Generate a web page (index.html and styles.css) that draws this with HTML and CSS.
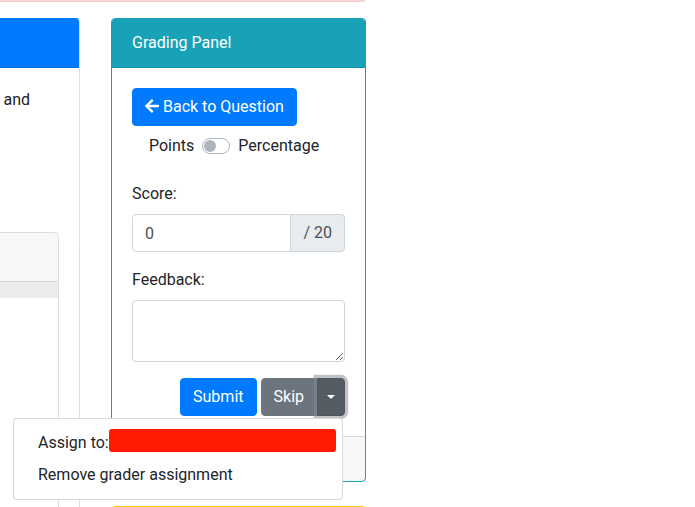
FILE: index.html
```html
<!DOCTYPE html>
<html lang="en">
<head>
<meta charset="utf-8">
<title>Grading Panel</title>
<link rel="stylesheet" href="styles.css">
</head>
<body>
<div class="page">
  <div class="alert"></div>
  <div class="row">
    <div class="col-main">
      <div class="card card-question">
        <div class="card-header header-primary"></div>
        <div class="card-body">
          <p class="question-text">and</p>
          <div class="card card-answer">
            <div class="card-header"></div>
            <div class="answer-band"></div>
            <div class="answer-body"></div>
          </div>
        </div>
      </div>
    </div>
    <div class="col-side">
      <div class="card card-info">
        <div class="card-header header-info">Grading Panel</div>
        <div class="card-body">
          <div>
            <button class="btn btn-primary" type="button"><svg class="icon" viewBox="0 0 448 512" aria-hidden="true"><path fill="currentColor" d="M257.5 445.1l-22.2 22.2c-9.4 9.4-24.6 9.4-33.9 0L7 273c-9.4-9.4-9.4-24.6 0-33.9L201.4 44.7c9.4-9.4 24.6-9.4 33.9 0l22.2 22.2c9.5 9.5 9.3 25-.4 34.3L136.6 216H424c13.3 0 24 10.7 24 24v32c0 13.3-10.7 24-24 24H136.6l120.5 114.8c9.8 9.3 10 24.8.4 34.3z"/></svg> Back to Question</button>
          </div>
          <div class="unit-toggle">
            <span>Points</span>
            <label class="switch"><span class="switch-track"><span class="switch-knob"></span></span>Percentage</label>
          </div>
          <div class="form-group score-group">
            <label class="form-label" for="score">Score:</label>
            <div class="input-group">
              <input class="form-control input-score" id="score" type="text" value="0">
              <span class="input-append">/ 20</span>
            </div>
          </div>
          <div class="form-group">
            <label class="form-label" for="feedback">Feedback:</label>
            <textarea class="form-control textarea" id="feedback" rows="2"></textarea>
          </div>
          <div class="actions">
            <button class="btn btn-primary" type="button">Submit</button>
            <div class="btn-group">
              <button class="btn btn-secondary btn-left" type="button">Skip</button>
              <button class="btn btn-secondary btn-split" type="button"><span class="caret"></span></button>
              <div class="dropdown-menu">
                <div class="dropdown-item">Assign to:<span class="redacted"></span></div>
                <div class="dropdown-item">Remove grader assignment</div>
              </div>
            </div>
          </div>
        </div>
        <div class="card-footer"><span class="footer-text"></span></div>
      </div>
      <div class="card card-warning"></div>
    </div>
  </div>
</div>
</body>
</html>
```
FILE: styles.css
```css
* {
  box-sizing: border-box;
}

body {
  margin: 0;
  height: 507px;
  overflow: hidden;
  background: #fff;
  color: #212529;
  font-family: Roboto, "Noto Sans", "Liberation Sans", sans-serif;
  font-size: 16px;
  line-height: 1.5;
}

.page {
  width: 586px;
  margin-left: -220px;
}

.alert {
  height: 60px;
  margin-top: -58px;
  margin-bottom: 16px;
  background: #f8d7da;
  border: 1px solid #f5c6cb;
  border-radius: 4px;
}

.row {
  display: flex;
  gap: 31px;
  align-items: flex-start;
}

.col-main {
  flex: 0 0 300px;
  min-width: 0;
}

.col-side {
  flex: 0 0 255px;
  min-width: 0;
}

.card {
  background: #fff;
  border: 1px solid rgba(0, 0, 0, 0.125);
  border-radius: 4px;
  overflow: hidden;
}

.card-header {
  min-height: 49px;
  padding: 12px 20px;
  background: rgba(0, 0, 0, 0.03);
  border-bottom: 1px solid rgba(0, 0, 0, 0.125);
  white-space: nowrap;
}

.card-body {
  padding: 20px;
}

.card-footer {
  padding: 12px 20px;
  background: rgba(0, 0, 0, 0.03);
  border-top: 1px solid rgba(0, 0, 0, 0.125);
}

.footer-text {
  display: block;
  height: 20px;
}

.card-question {
  min-height: 700px;
  border-top-color: #007bff;
}

.header-primary {
  background: #007bff;
  color: #fff;
}

.question-text {
  margin: 0 0 16px;
  padding-right: 29px;
  text-align: right;
  white-space: nowrap;
}

.card-answer {
  margin-top: 120px;
  min-height: 500px;
  border-color: #dcdcdc;
}

.answer-band {
  height: 16px;
  background: #ececec;
}

.card-info {
  border-color: #17a2b8;
  overflow: visible;
}

.header-info {
  background: #17a2b8;
  color: #fff;
  border-radius: 3px 3px 0 0;
}

.card-warning {
  margin-top: 24px;
  height: 200px;
  border-color: #ffc107;
}

.btn {
  display: inline-block;
  padding: 6px 12px;
  border: 1px solid transparent;
  border-radius: 4px;
  font-family: inherit;
  font-size: 16px;
  line-height: 24px;
  color: #fff;
  cursor: pointer;
  white-space: nowrap;
}

.btn-primary {
  background: #007bff;
  border-color: #007bff;
}

.btn-secondary {
  background: #6c757d;
  border-color: #6c757d;
}

.icon {
  width: 14px;
  height: 16px;
  vertical-align: -2px;
}

.unit-toggle {
  display: flex;
  align-items: center;
  gap: 8px;
  height: 24px;
  margin-top: 8px;
  margin-left: 17px;
}

.switch {
  display: flex;
  align-items: center;
  gap: 8px;
}

.switch-track {
  display: block;
  width: 28px;
  height: 16px;
  padding: 1px;
  border: 1px solid #adb5bd;
  border-radius: 8px;
  background: #fff;
}

.switch-knob {
  display: block;
  width: 12px;
  height: 12px;
  border-radius: 50%;
  background: #adb5bd;
}

.form-group {
  margin-bottom: 16px;
}

.score-group {
  margin-top: 24px;
}

.form-label {
  display: block;
  margin-bottom: 8px;
}

.input-group {
  display: flex;
}

.form-control {
  display: block;
  padding: 6px 12px;
  border: 1px solid #ced4da;
  border-radius: 4px;
  background: #fff;
  color: #495057;
  font-family: inherit;
  font-size: 16px;
  line-height: 24px;
}

.input-score {
  flex: 1 1 auto;
  min-width: 0;
  height: 38px;
  border-radius: 4px 0 0 4px;
}

.input-append {
  padding: 6px 12px;
  margin-left: -1px;
  border: 1px solid #ced4da;
  border-radius: 0 4px 4px 0;
  background: #e9ecef;
  color: #495057;
  line-height: 24px;
  white-space: nowrap;
}

.textarea {
  width: 100%;
  height: 62px;
  resize: vertical;
}

.actions {
  display: flex;
  justify-content: flex-end;
  gap: 4px;
}

.btn-group {
  position: relative;
  display: flex;
}

.btn-left {
  border-radius: 4px 0 0 4px;
}

.btn-split {
  position: relative;
  z-index: 1;
  padding: 6px 9px;
  border-radius: 0 4px 4px 0;
  background: #545b62;
  border-color: #4e555b;
  box-shadow: 0 0 0 3.2px rgba(130, 138, 145, 0.5);
}

.caret {
  display: inline-block;
  vertical-align: 3px;
  border-top: 4.8px solid #fff;
  border-left: 4.8px solid transparent;
  border-right: 4.8px solid transparent;
}

.dropdown-menu {
  position: absolute;
  z-index: 10;
  top: calc(100% + 2px);
  right: 2px;
  width: 330px;
  padding: 8px 0;
  background: #fff;
  border: 1px solid rgba(0, 0, 0, 0.15);
  border-radius: 4px;
}

.dropdown-item {
  padding: 4px 24px;
  color: #212529;
  white-space: nowrap;
}

.redacted {
  display: inline-block;
  width: 227px;
  height: 23px;
  margin: -2px 0 -4px;
  vertical-align: baseline;
  background: #ff1a00;
  border-radius: 3px;
}
```
